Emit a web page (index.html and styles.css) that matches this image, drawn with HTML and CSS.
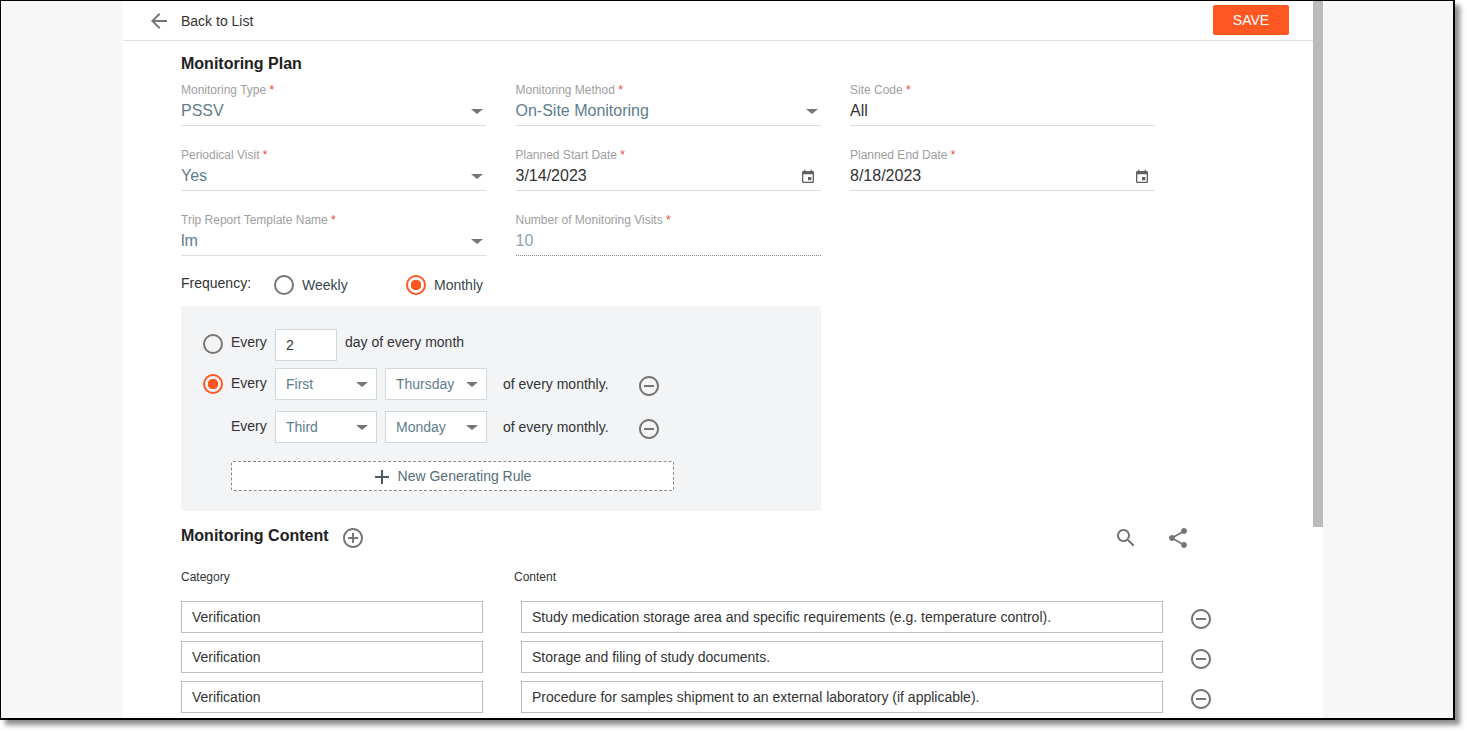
FILE: index.html
```html
<!DOCTYPE html>
<html lang="en">
<head>
<meta charset="utf-8">
<title>Monitoring Plan</title>
<link rel="stylesheet" href="styles.css">
</head>
<body>
<svg class="defs" width="0" height="0" aria-hidden="true">
  <symbol id="minus" viewBox="0 0 24 24"><path d="M7 11v2h10v-2H7zm5-9C6.48 2 2 6.48 2 12s4.48 10 10 10 10-4.48 10-10S17.52 2 12 2zm0 18c-4.41 0-8-3.59-8-8s3.59-8 8-8 8 3.59 8 8-3.59 8-8 8z"/></symbol>
  <symbol id="plus" viewBox="0 0 24 24"><path d="M13 7h-2v4H7v2h4v4h2v-4h4v-2h-4V7zm-1-5C6.48 2 2 6.48 2 12s4.48 10 10 10 10-4.48 10-10S17.52 2 12 2zm0 18c-4.41 0-8-3.59-8-8s3.59-8 8-8 8 3.59 8 8-3.59 8-8 8z"/></symbol>
  <symbol id="cal" viewBox="0 0 24 24"><path d="M17 12h-5v5h5v-5zM16 1v2H8V1H6v2H5c-1.11 0-1.99.9-1.99 2L3 19c0 1.1.89 2 2 2h14c1.1 0 2-.9 2-2V5c0-1.1-.9-2-2-2h-1V1h-2zm3 18H5V8h14v11z"/></symbol>
</svg>
<div class="frame">
  <div class="scrollbar"></div>
  <main class="page">
    <header class="topbar">
      <a class="back">
        <svg class="back-icon" viewBox="0 0 24 24"><path d="M20 11H7.83l5.59-5.59L12 4l-8 8 8 8 1.41-1.41L7.83 13H20v-2z"/></svg>
        <span>Back to List</span>
      </a>
      <button class="save">SAVE</button>
    </header>
    <div class="content">
      <h2 class="title">Monitoring Plan</h2>
      <div class="fields">
        <div class="field"><label>Monitoring Type <i>*</i></label><div class="value muted">PSSV<span class="caret"></span></div></div>
        <div class="field"><label>Monitoring Method <i>*</i></label><div class="value muted">On-Site Monitoring<span class="caret"></span></div></div>
        <div class="field"><label>Site Code <i>*</i></label><div class="value">All</div></div>
        <div class="field"><label>Periodical Visit <i>*</i></label><div class="value muted">Yes<span class="caret"></span></div></div>
        <div class="field"><label>Planned Start Date <i>*</i></label><div class="value">3/14/2023<svg class="cal"><use href="#cal"/></svg></div></div>
        <div class="field"><label>Planned End Date <i>*</i></label><div class="value">8/18/2023<svg class="cal"><use href="#cal"/></svg></div></div>
        <div class="field"><label>Trip Report Template Name <i>*</i></label><div class="value muted">lm<span class="caret"></span></div></div>
        <div class="field"><label>Number of Monitoring Visits <i>*</i></label><div class="value disabled">10</div></div>
      </div>
      <div class="frequency">
        <span class="freq-label">Frequency:</span>
        <span class="option weekly"><span class="radio"></span>Weekly</span>
        <span class="option"><span class="radio on"></span>Monthly</span>
      </div>
      <section class="panel">
        <div class="rule rule-first">
          <span class="radio"></span><span class="every">Every</span>
          <span class="box num">2</span>
          <span class="day-text">day of every month</span>
        </div>
        <div class="rule rule-second">
          <span class="radio"></span><span class="radio on abs-none"></span>
          <span class="every">Every</span>
          <span class="box sel">First<span class="caret"></span></span>
          <span class="box sel">Thursday<span class="caret"></span></span>
          <span class="month-text">of every monthly.</span>
          <svg class="minus-sm"><use href="#minus"/></svg>
        </div>
        <div class="rule rule-third">
          <span class="every">Every</span>
          <span class="box sel">Third<span class="caret"></span></span>
          <span class="box sel">Monday<span class="caret"></span></span>
          <span class="month-text">of every monthly.</span>
          <svg class="minus-sm"><use href="#minus"/></svg>
        </div>
        <button class="new-rule">
          <svg class="add" viewBox="0 0 16 16"><path d="M7 1h2v6h6v2H9v6H7V9H1V7h6z"/></svg>New Generating Rule
        </button>
      </section>
      <div class="mc-head">
        <h2 class="title">Monitoring Content</h2>
        <svg class="plus-icon"><use href="#plus"/></svg>
        <svg class="search" viewBox="0 0 24 24"><path d="M15.5 14h-.79l-.28-.27C15.41 12.59 16 11.11 16 9.5 16 5.91 13.09 3 9.5 3S3 5.91 3 9.5 5.91 16 9.5 16c1.61 0 3.09-.59 4.23-1.57l.27.28v.79l5 4.99L20.49 19l-4.99-5zm-6 0C7.01 14 5 11.99 5 9.5S7.01 5 9.5 5 14 7.01 14 9.5 11.99 14 9.5 14z"/></svg>
        <svg class="share" viewBox="0 0 24 24"><path d="M18 16.08c-.76 0-1.44.3-1.96.77L8.91 12.7c.05-.23.09-.46.09-.7s-.04-.47-.09-.7l7.05-4.11c.54.5 1.25.81 2.04.81 1.66 0 3-1.34 3-3s-1.34-3-3-3-3 1.34-3 3c0 .24.04.47.09.7L8.04 9.81C7.5 9.31 6.79 9 6 9c-1.66 0-3 1.34-3 3s1.34 3 3 3c.79 0 1.5-.31 2.04-.81l7.12 4.16c-.05.21-.08.43-.08.65 0 1.61 1.31 2.92 2.92 2.92s2.92-1.31 2.92-2.92-1.31-2.92-2.92-2.92z"/></svg>
      </div>
      <div class="mc-labels"><span class="lab-cat">Category</span><span>Content</span></div>
      <div class="mc-row">
        <div class="cell cat">Verification</div>
        <div class="cell con">Study medication storage area and specific requirements (e.g. temperature control).</div>
        <svg class="minus-sm row-minus"><use href="#minus"/></svg>
      </div>
      <div class="mc-row">
        <div class="cell cat">Verification</div>
        <div class="cell con">Storage and filing of study documents.</div>
        <svg class="minus-sm row-minus"><use href="#minus"/></svg>
      </div>
      <div class="mc-row">
        <div class="cell cat">Verification</div>
        <div class="cell con">Procedure for samples shipment to an external laboratory (if applicable).</div>
        <svg class="minus-sm row-minus"><use href="#minus"/></svg>
      </div>
    </div>
  </main>
</div>
</body>
</html>
```

FILE: styles.css
```css
* { box-sizing: border-box; }
html, body { margin: 0; height: 100%; background: #fff; overflow: hidden; }
body { font-family: "Liberation Sans", Arial, sans-serif; color: #333; font-size: 14px; }
.defs { position: absolute; }
.frame {
  position: relative; width: 1455px; height: 720px; background: #f7f7f7;
  border: 1px solid #000; border-width: 1px 2px 2px 1px; overflow: hidden;
  padding-left: 122px;
}
.wrap-shadow { display: none; }
html { background: #fff; }
body { padding: 0; }
.frame { box-shadow: 5px 5px 5px #8c8c8c; overflow: visible; clip-path: inset(-10px -10px -10px -10px); }
.page { width: 1200px; height: 717px; background: #fff; overflow: hidden; }
.scrollbar { position: absolute; left: 1312px; top: 0; width: 10px; height: 526px; background: #bbb; z-index: 2; }

.topbar { height: 40px; border-bottom: 1px solid #e0e0e0; display: flex; align-items: center; justify-content: space-between; padding: 0 34px 0 24px; }
.back { display: flex; align-items: center; color: #333; font-size: 14px; }
.back-icon { width: 24px; height: 24px; fill: #757575; margin-right: 10px; }
.save { width: 76px; height: 30px; margin-top: -2px; border: 0; border-radius: 2px; background: #ff5722; color: #fff; font: 14px "Liberation Sans", Arial, sans-serif; padding: 0; }

.content { padding-left: 58px; }
.title { margin: 0; font-size: 16px; font-weight: bold; color: #212121; line-height: 20px; }
.content > .title { padding-top: 13px; }

.fields { display: grid; grid-template-columns: repeat(3, 305px); column-gap: 29.5px; grid-auto-rows: 65px; margin-top: 9px; }
.field label { display: block; font-size: 12px; line-height: 14px; color: #9e9e9e; }
.field label i { font-style: normal; color: #f44336; }
.value { position: relative; margin-top: 4px; height: 25px; padding-bottom: 4px; font-size: 16px; line-height: 20px; color: #333; border-bottom: 1px solid #ddd; }
.value.muted { color: #607d8b; }
.value.disabled { color: #90a4ae; border-bottom: 1px dotted #888; }
.caret { position: absolute; right: 3px; top: 8px; width: 0; height: 0; border: 6px solid transparent; border-top: 5px solid #757575; border-bottom: 0; }
.cal { position: absolute; right: 5px; top: 3px; width: 16px; height: 16px; fill: #616161; }

.frequency { display: flex; align-items: center; height: 22px; margin-top: -4px; color: #333; }
.freq-label { width: 93px; font-size: 14px; position: relative; top: -2px; }
.option { display: flex; align-items: center; font-size: 14px; color: #37474f; }
.option .radio { margin-right: 8px; }
.weekly { width: 132px; }
.radio { display: inline-block; flex: none; width: 20px; height: 20px; border-radius: 50%; border: 2px solid #757575; background: transparent; }
.radio.on { border-color: #ff5722; background: radial-gradient(circle, #ff5722 0 5px, transparent 5.5px); }

.panel { width: 640px; height: 205px; margin-top: 10px; background: #f2f4f6; padding: 22px 0 0 22px; }
.rule { display: flex; align-items: center; height: 32px; font-size: 14px; color: #333; }
.every { margin-left: 8px; width: 36px; flex: none; position: relative; top: -1px; }
.rule-first .every, .day-text { top: -2px; position: relative; }
.rule-second { margin-top: 8px; }
.rule-second > .radio:first-child { display: none; }
.rule-third { margin-top: 11px; padding-left: 20px; }
.box { position: relative; display: block; height: 32px; background: #fff; border: 1px solid #cfd8dc; line-height: 30px; flex: none; }
.num { width: 62px; margin-left: 8px; padding-left: 10px; color: #333; line-height: 30px; margin-top: 2px; }
.day-text { margin-left: 8px; }
.sel { width: 102px; margin-left: 8px; padding-left: 10px; color: #607d8b; }
.sel .caret { right: 8px; top: 13px; border-width: 5px 6px 0; }
.rule .every + .box { margin-left: 8px; }
.month-text { margin-left: 16px; width: 130px; flex: none; }
.minus-sm { width: 24px; height: 24px; fill: #757575; flex: none; }
.rule .minus-sm { margin-left: 4px; margin-top: 3px; }
.new-rule { display: flex; align-items: center; justify-content: center; width: 443px; height: 30px; margin: 18px 0 0 28px; background: #fff; border: 1px dashed #8a8a8a; border-radius: 2px; color: #546e7a; font: 14px "Liberation Sans", Arial, sans-serif; padding: 0; }
.add { width: 16px; height: 16px; fill: #455a64; margin-right: 8px; position: relative; top: 1px; }

.mc-head { display: flex; align-items: center; height: 24px; margin-top: 15px; }
.mc-head .title { position: relative; top: -2px; }
.plus-icon { width: 24px; height: 24px; fill: #757575; margin-left: 12px; }
.search { width: 24px; height: 24px; fill: #757575; margin-left: 749px; }
.share { width: 24px; height: 24px; fill: #757575; margin-left: 28px; }
.mc-labels { display: flex; font-size: 12px; color: #333; line-height: 14px; margin-top: 20px; }
.lab-cat { width: 333px; }
.mc-row { display: flex; align-items: center; height: 32px; margin-top: 8px; }
.mc-labels + .mc-row { margin-top: 17px; }
.cell { height: 32px; border: 1px solid #bdbdbd; line-height: 30px; padding-left: 10px; color: #333; font-size: 14px; flex: none; }
.cat { width: 302px; }
.con { width: 642px; margin-left: 38px; }
.row-minus { margin-left: 26px; margin-top: 3px; }
```
